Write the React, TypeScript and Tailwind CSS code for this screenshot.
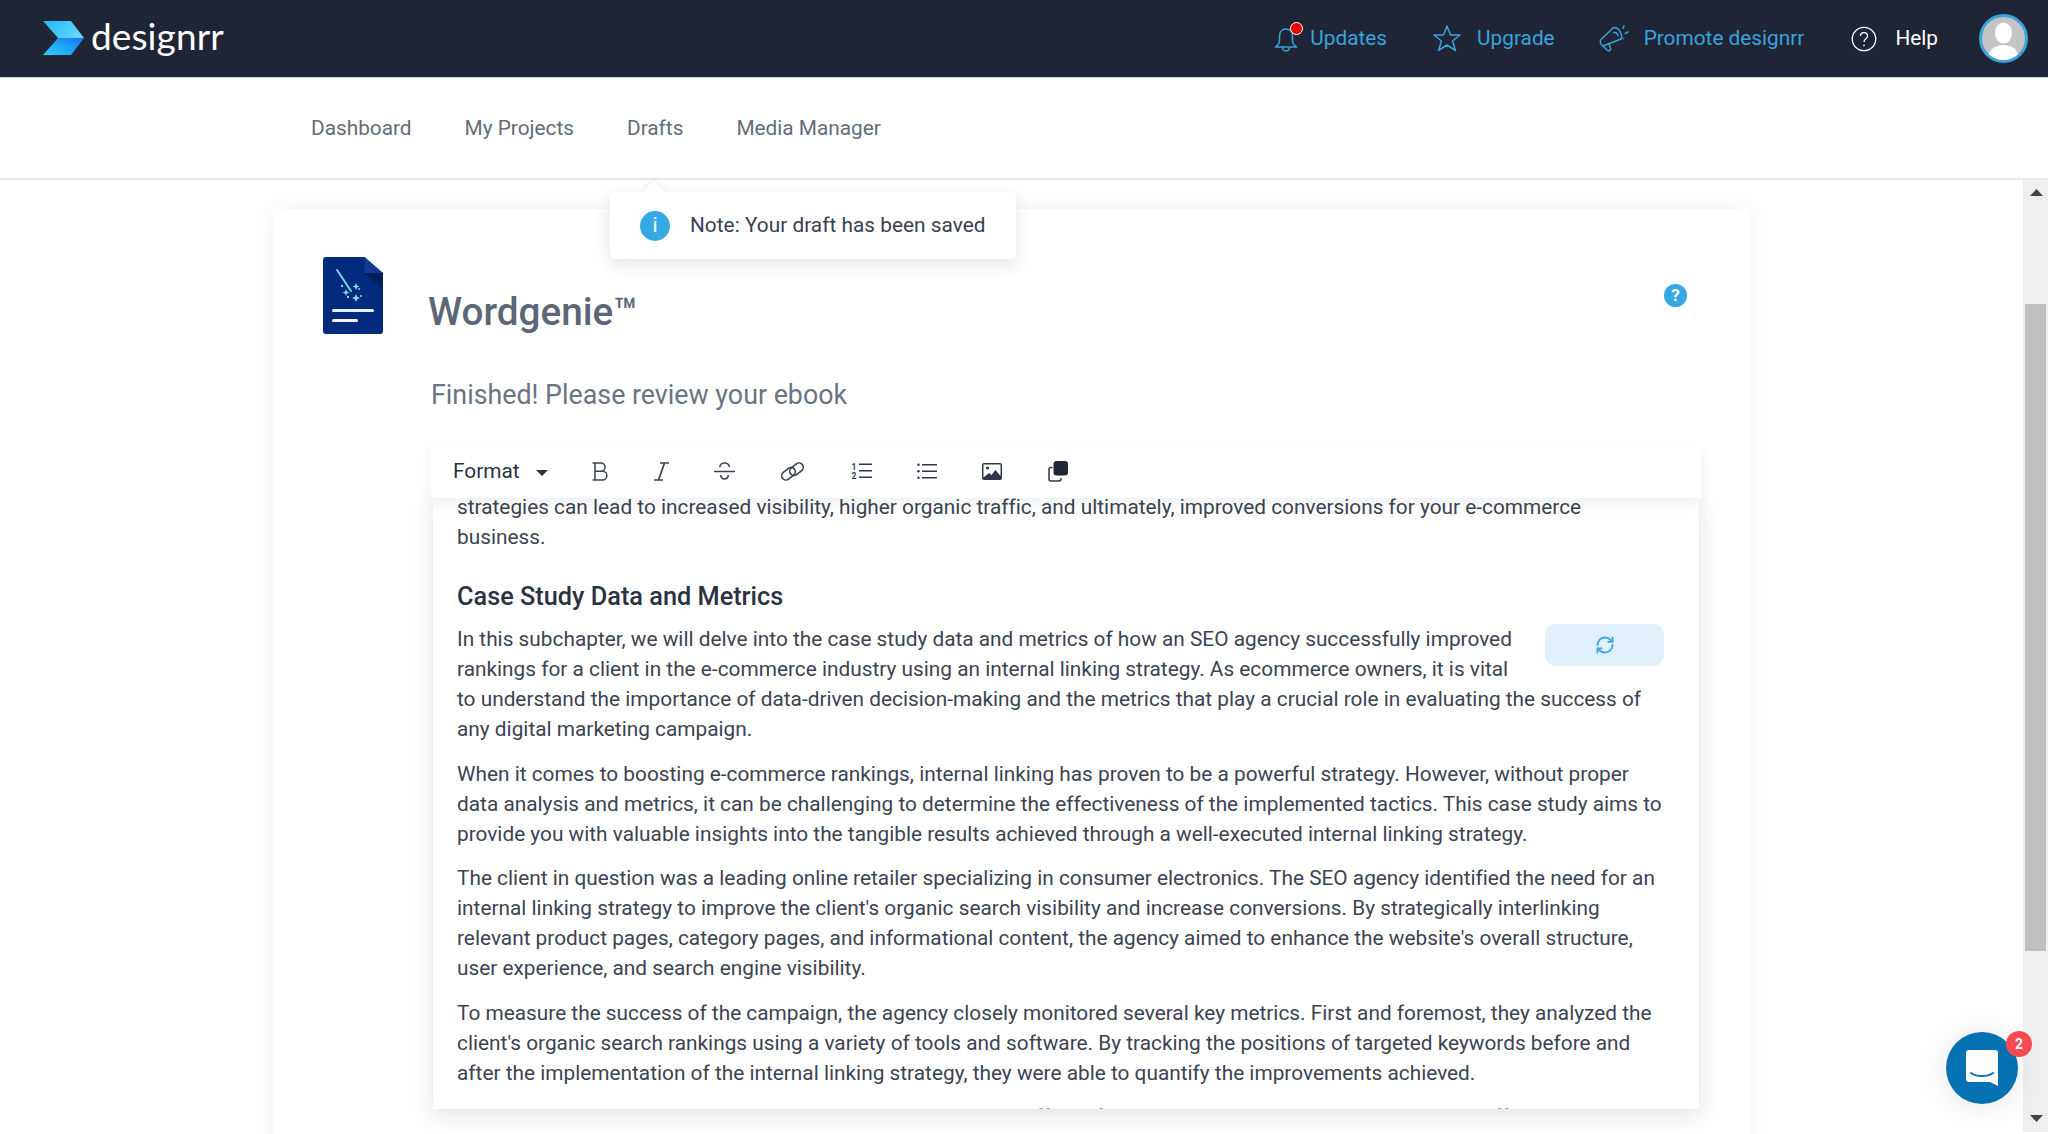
import React from "react";
import { RefreshCw } from "lucide-react";

const font = { fontFamily: "Roboto, sans-serif" };

function Logo() {
  return (
    <svg width="42" height="36" viewBox="0 0 42 36" className="shrink-0">
      <defs>
        <linearGradient id="lg1" x1="0" y1="0" x2="1" y2="0.3">
          <stop offset="0" stopColor="#1fb6f5" />
          <stop offset="1" stopColor="#62d5ff" />
        </linearGradient>
        <linearGradient id="lg2" x1="0" y1="1" x2="1" y2="0">
          <stop offset="0" stopColor="#2bd0ff" />
          <stop offset="1" stopColor="#1477f0" />
        </linearGradient>
      </defs>
      <polygon points="0,0 28,0 41,17 15,17" fill="url(#lg1)" />
      <polygon points="15,17 41,17 28,34 0,34" fill="url(#lg2)" />
    </svg>
  );
}

function DocIcon() {
  return (
    <svg width="60" height="77" viewBox="0 0 60 77">
      <path d="M3 0H41.500L60 16V74a3 3 0 0 1-3 3H3a3 3 0 0 1-3-3V3a3 3 0 0 1 3-3Z" fill="#022b7e" />
      <path d="M41.500 0L60 17H41.500Z" fill="#113a92" />
      <path d="M41.500 16H60V33Z" fill="#011f5c" />
      <line x1="14" y1="13" x2="28" y2="34" stroke="#72d8e8" strokeWidth="2" strokeLinecap="round" />
      <circle cx="19" cy="29" r="1" fill="#fff" />
      <circle cx="25" cy="40" r="1" fill="#fff" />
      <circle cx="36" cy="32" r="1" fill="#8ddce8" />
      <circle cx="38" cy="39" r="1" fill="#8ddce8" />
      <path d="M33 26l1 2.500 2.500 1-2.500 1-1 2.500-1-2.500-2.500-1 2.500-1Z" fill="#8ddce8" />
      <path d="M23 32l1 2.500 2.500 1-2.500 1-1 2.500-1-2.500-2.500-1 2.500-1Z" fill="#72d8e8" />
      <path d="M33 37l1.200 2.800 2.800 1.200-2.800 1.200-1.200 2.800-1.200-2.800-2.800-1.200 2.800-1.200Z" fill="#8ddce8" />
      <rect x="9" y="52" width="42" height="3" rx="1.500" fill="#dff3f8" />
      <rect x="9" y="62" width="26" height="3" rx="1.500" fill="#eef6fb" />
    </svg>
  );
}

function Bell() {
  return (
    <svg width="26" height="30" viewBox="0 0 26 30" fill="none" stroke="#38a3dc" strokeWidth="1.500" strokeLinejoin="round">
      <path d="M13 5c-4 0-6.500 3-6.500 7v5c0 2.500-2 4.500-4 6h21c-2-1.500-4-3.500-4-6v-5c0-4-2.500-7-6.500-7Z" />
      <path d="M9.500 23.500a3.500 3.500 0 0 0 7 0" />
    </svg>
  );
}

function Star() {
  return (
    <svg width="28" height="30" viewBox="1 1 28 30" fill="none" stroke="#38a3dc" strokeWidth="1.500" strokeLinejoin="round">
      <path d="M15 3l3.500 9h9.500l-7.500 6 3 9.500-8.500-5.500-8.500 5.500 3-9.500-7.500-6h9.500Z" />
    </svg>
  );
}

function Megaphone() {
  return (
    <svg width="33" height="28" viewBox="-1 -1 33 28" fill="none" stroke="#38a3dc" strokeWidth="1.500" strokeLinejoin="round" strokeLinecap="round">
      <path d="M14 2L2 13.500c-1.500 1.500-.5 5 2 6.500l18-7" />
      <path d="M14 2c3-1.500 6 1 7.500 4.500s1.500 6.500.5 6.500" />
      <path d="M4 20l4.500 4.500c1.500 1 3.800-.5 3-2.300l-1.700-4.500" />
      <path d="M15 6.500c2-.5 3.500 1 4 3" />
      <path d="M24 2.500L25 0M26 7.500l3-1.500M24.500 12.500h.1" />
    </svg>
  );
}

function Avatar() {
  return (
    <div className="w-[49px] h-[49px] rounded-full border-[3px] border-[#38a3dc] bg-[#c4c4c4] overflow-hidden shrink-0">
      <svg width="43" height="43" viewBox="0 0 43 43">
        <ellipse cx="21.500" cy="16" rx="8.500" ry="10.500" fill="#fff" />
        <path d="M6 43c0-10 7-15 15.500-15S37 33 37 43Z" fill="#fff" />
      </svg>
    </div>
  );
}

function TopLink({ icon, label, gap, white }: { icon: React.ReactNode; label: string; gap: string; white?: boolean }) {
  return (
    <div className={`flex items-center ${gap}`}>
      {icon}
      <span className={`text-[20.8px] ${white ? "text-white" : "text-[#38a3dc]"}`}>{label}</span>
    </div>
  );
}

function Tool({ children, ml }: { children: React.ReactNode; ml: string }) {
  return <div className={`w-[28px] h-[28px] flex items-center justify-center shrink-0 ${ml}`}>{children}</div>;
}

function Toolbar() {
  const s = { fill: "none", stroke: "#3a4152", strokeWidth: 1.5 };
  const ink = "#2f3648";
  return (
    <div className="relative z-10 h-[53px] bg-white shadow-[0_6px_12px_rgba(30,40,70,0.07)] flex items-center pl-[22px]">
      <span className="text-[20.8px] text-[#2a3142] w-[68px]">Format</span>
      <svg width="12" height="6" viewBox="0 0 12 6" className="ml-[15px] mt-[3px]"><path d="M0 0h12L6 6Z" fill="#2a3142" /></svg>
      <div className="flex items-center ml-[38px] -mt-[1px]">
        <Tool ml="ml-0"><svg width="16" height="19" viewBox="0 0 16 19" {...s}><path d="M0.500 1H9a4 4 0 0 1 0 8.200H3M3 1v17M3 9.200h7.500a4.400 4.400 0 0 1 0 8.800H0.500" /></svg></Tool>
        <Tool ml="ml-[33px]"><svg width="15" height="19" viewBox="0 0 15 19" {...s} strokeWidth={1.7}><path d="M6 1h9M0 18h9M10.500 1L4.500 18" /></svg></Tool>
        <Tool ml="ml-[35px]"><svg width="21" height="18" viewBox="0 0 21 18" {...s}><path d="M0 9.500h21M15.500 5C15 2.500 13 1 10.500 1 7.500 1 5.500 3 6 5.500M6.500 13c.5 2.800 2 4 4 4s3.500-1.200 4-4" /></svg></Tool>
        <Tool ml="ml-[40px]"><svg width="25" height="19" viewBox="0 0 25 19" {...s} strokeWidth={1.6}><rect x="1" y="7.500" width="15" height="8.500" rx="4.250" transform="rotate(-38 8.500 11.750)" /><rect x="9" y="3" width="15" height="8.500" rx="4.250" transform="rotate(-38 16.500 7.250)" /></svg></Tool>
        <Tool ml="ml-[41px]"><svg width="21" height="18" viewBox="0 0 21 18"><path d="M8 1.500h13V3H8ZM8 8h13v1.500H8ZM8 14.500h13V16H8Z" fill={ink} /><text x="0.500" y="7.500" fontSize="8.500" fontWeight="700" fill={ink} fontFamily="Roboto, sans-serif">1</text><text x="0.500" y="17" fontSize="8.500" fontWeight="700" fill={ink} fontFamily="Roboto, sans-serif">2</text></svg></Tool>
        <Tool ml="ml-[38px]"><svg width="20" height="17" viewBox="0 0 20 17"><path d="M5 1h15v1.500H5ZM5 7.500h15V9H5ZM5 14h15v1.500H5Z" fill={ink} /><circle cx="1.500" cy="1.800" r="1.200" fill={ink} /><circle cx="1.500" cy="8.300" r="1.200" fill={ink} /><circle cx="1.500" cy="14.800" r="1.200" fill={ink} /></svg></Tool>
        <Tool ml="ml-[37px]"><svg width="20" height="17" viewBox="0 0 20 17"><rect width="20" height="17" rx="2" fill={ink} /><path d="M1.500 1.500h17v11.500l-5-6-4 5-2.500-2-5.500 4.500Z" fill="#fff" /><circle cx="5.500" cy="5" r="1.600" fill={ink} /></svg></Tool>
        <Tool ml="ml-[38px]"><svg width="20" height="21" viewBox="0 0 20 21"><path d="M4.500 6.500H3a2 2 0 0 0-2 2V18a2 2 0 0 0 2 2h8a2 2 0 0 0 2-2v-1" fill="none" stroke={ink} strokeWidth="1.500" /><rect x="5.500" width="14.500" height="14.500" rx="3" fill="#1f2737" /></svg></Tool>
      </div>
    </div>
  );
}

const P = ({ children }: { children: React.ReactNode }) => <p className="mb-[14.5px]">{children}</p>;

export default function App() {
  return (
    <div className="h-screen overflow-hidden flex flex-col bg-white" style={font}>
      <header className="h-[78px] shrink-0 bg-[#1f2535] border-b border-[#c8cacd] flex items-center justify-between pl-[43px] pr-[20px]">
        <div className="flex items-center gap-[6px]">
          <Logo />
          <span className="text-white text-[37px] leading-none -mt-[6px] tracking-[0.1px]" style={{ fontFamily: "Lato, sans-serif" }}>designrr</span>
        </div>
        <div className="flex items-center">
          <div className="relative mr-[46px]">
            <TopLink gap="gap-[11px]" icon={<Bell />} label="Updates" />
            <span className="absolute left-[17px] -top-[1px] w-[13px] h-[13px] rounded-full bg-[#ef0000] border-[1.500px] border-white" />
          </div>
          <div className="mr-[43px]"><TopLink gap="gap-[16px]" icon={<Star />} label="Upgrade" /></div>
          <div className="mr-[47px]"><TopLink gap="gap-[13px]" icon={<Megaphone />} label="Promote designrr" /></div>
          <div className="mr-[41px]">
            <TopLink gap="gap-[18px]" white label="Help" icon={
              <svg width="26" height="26" viewBox="0 0 27 27" fill="none" stroke="#fff" strokeWidth="1.300">
                <circle cx="13.500" cy="13.500" r="12.200" />
                <path d="M9.800 10.500c0-2.200 1.700-3.700 3.700-3.700s3.700 1.500 3.700 3.500c0 3-3.700 3-3.700 6.200" />
                <circle cx="13.500" cy="20" r=".9" fill="#fff" stroke="none" />
              </svg>
            } />
          </div>
          <Avatar />
        </div>
      </header>

      <div className="flex-1 min-h-0 flex flex-col relative">
        <nav className="h-[102px] shrink-0 bg-white border-b-2 border-[#e8e9ea] flex items-center pl-[311px] pt-[2px] gap-[53px] text-[20.8px] text-[#646c7a]">
          <span>Dashboard</span>
          <span>My Projects</span>
          <span>Drafts</span>
          <span>Media Manager</span>
        </nav>

        <div className="absolute z-20 left-[610px] top-[114px] w-[406px] h-[67px] bg-white rounded-[6px] shadow-[0_6px_16px_rgba(30,40,70,0.12)] flex items-center pl-[30px]">
          <span className="absolute left-[36px] -top-[8px] w-[16px] h-[16px] rotate-45 bg-white rounded-[2px] shadow-[-2px_-2px_5px_rgba(30,40,70,0.06)]" />
          <span className="relative w-[30px] h-[30px] rounded-full bg-[#36a9e4] text-white flex items-center justify-center text-[21px] leading-none">i</span>
          <span className="relative ml-[20px] text-[20.8px] text-[#3a4150] tracking-[0.03px]">Note: Your draft has been saved</span>
        </div>

        <div className="flex-1 min-h-0 flex">
          <main className="flex-1 min-w-0 pl-[273px] pt-[29px] overflow-hidden">
            <div className="w-[1477px] h-[1000px] bg-white rounded-[4px] shadow-[0_0_24px_rgba(30,40,70,0.06)] relative pl-[158px]">
              <div className="absolute left-[50px] top-[48px]"><DocIcon /></div>
              <div className="absolute right-[63px] top-[75px] w-[23px] h-[23px] rounded-full bg-[#36a9e4] text-white flex items-center justify-center text-[17px] font-bold leading-none">?</div>
              <h1 className="pt-[78px] -ml-[3px] text-[38.7px] leading-[50px] font-medium text-[#5c6677]">Wordgenie™</h1>
              <h2 className="pt-[38px] text-[26.8px] leading-[40px] text-[#6a7484]">Finished! Please review your ebook</h2>
              <div className="mt-[30px] w-[1270px]">
                <Toolbar />
                <div className="relative mx-[2px] h-[611px] overflow-hidden bg-white shadow-[0_6px_22px_rgba(30,40,70,0.14)] pl-[24px] pr-[28px] text-[20.8px] leading-[30px] text-[#3c4352] tracking-[0.012px]">
                  <div className="-mt-[6px]">
                    <P>strategies can lead to increased visibility, higher organic traffic, and ultimately, improved conversions for your e-commerce<br />business.</P>
                    <h3 className="text-[25.3px] leading-[36px] font-medium text-[#2b3242] mt-[27px] mb-[9px] tracking-normal">Case Study Data and Metrics</h3>
                    <button className="float-right ml-[10px] mr-[7px] w-[119px] h-[42px] rounded-[11px] bg-[#e1f1fb] flex items-center justify-center">
                      <RefreshCw size={20} color="#3fa9e6" strokeWidth={2.3} />
                    </button>
                    <P>In this subchapter, we will delve into the case study data and metrics of how an SEO agency successfully improved rankings for a client in the e-commerce industry using an internal linking strategy. As ecommerce owners, it is vital to&nbsp;understand the importance of data-driven decision-making and the metrics that play a crucial role in evaluating the success of any digital marketing campaign.</P>
                    <P>When it comes to boosting e-commerce rankings, internal linking has proven to be a powerful strategy. However, without proper data analysis and metrics, it can be challenging to determine the effectiveness of the implemented tactics. This case study aims to provide you with valuable insights into the tangible results achieved through a well-executed internal linking strategy.</P>
                    <P>The client in question was a leading online retailer specializing in consumer electronics. The SEO agency identified the need for an internal linking strategy to improve the client's organic search visibility and increase conversions. By strategically interlinking relevant product pages, category pages, and informational content, the agency aimed to enhance the website's overall structure, user experience, and search engine visibility.</P>
                    <P>To measure the success of the campaign, the agency closely monitored several key metrics. First and foremost, they analyzed the client's organic search rankings using a variety of tools and software. By tracking the positions of targeted keywords before and after the implementation of the internal linking strategy, they were able to quantify the improvements achieved.</P>
                    <P>In addition to ranking changes, the agency also evaluated the effect of the internal linking changes on organic traffic to the site.</P>
                  </div>
                </div>
              </div>
            </div>
          </main>

          <div className="relative w-[25px] shrink-0 mb-[2px] bg-[#efefef]">
            <svg width="13" height="7" viewBox="0 0 13 7" className="absolute left-[7px] top-[9px]"><path d="M6.500 0L13 7H0Z" fill="#444" /></svg>
            <div className="absolute left-[2px] top-[124px] h-[647px] w-[21px] bg-[#bfbfbf]" />
            <svg width="13" height="7" viewBox="0 0 13 7" className="absolute left-[7px] bottom-[10px]"><path d="M6.500 7L13 0H0Z" fill="#444" /></svg>
          </div>
        </div>

        <div className="absolute z-30 right-[30px] bottom-[30px] w-[72px] h-[72px] rounded-full bg-[#0471b3] shadow-[0_2px_30px_rgba(0,0,0,0.10)] flex items-center justify-center">
          <svg width="32" height="36" viewBox="0 0 32 36"><path d="M3 0h26a3 3 0 0 1 3 3v33l-8-4H3a3 3 0 0 1-3-3V3a3 3 0 0 1 3-3Z" fill="#fff" /><path d="M5 23c6 4 16 4 22 0" fill="none" stroke="#0471b3" strokeWidth="2" strokeLinecap="round" /></svg>
          <span className="absolute -right-[14px] -top-[1px] w-[26px] h-[26px] rounded-full bg-[#fb4a52] text-white text-[14px] font-bold flex items-center justify-center">2</span>
        </div>
      </div>
    </div>
  );
}
